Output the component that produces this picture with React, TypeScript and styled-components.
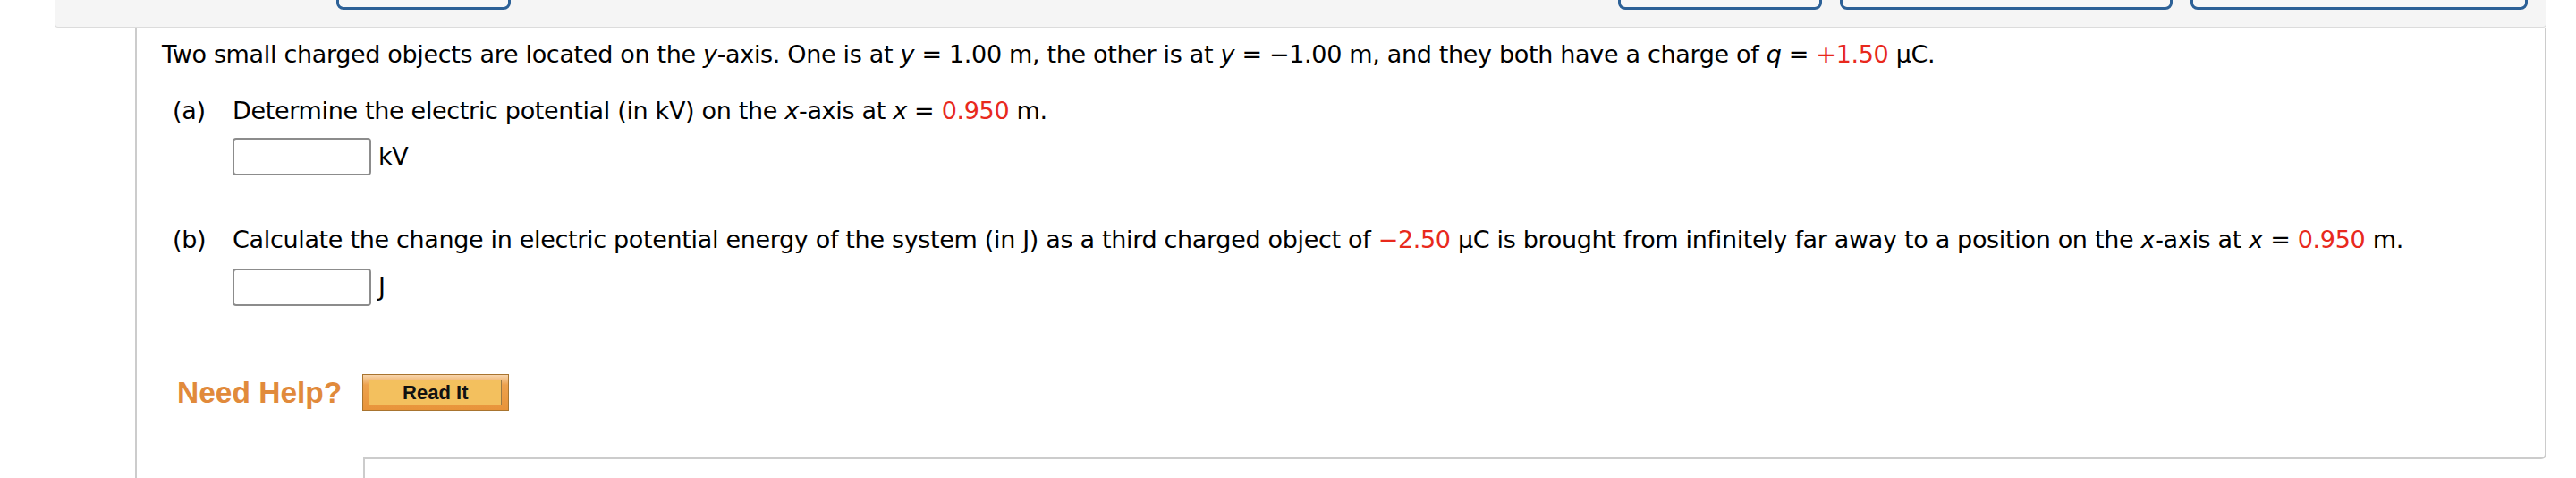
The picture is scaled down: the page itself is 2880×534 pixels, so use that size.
import React from "react";
import styled, { createGlobalStyle } from "styled-components";

const GlobalStyle = createGlobalStyle`
  html, body {
    margin: 0;
    padding: 0;
    background: #ffffff;
  }
  body {
    font-family: "DejaVu Sans", Verdana, sans-serif;
    color: #000000;
  }
`;

const Page = styled.div`
  width: 2786px;
  margin-left: 61px;
  height: 534px;
  overflow: hidden;
`;

const TopBar = styled.div`
  box-sizing: border-box;
  height: 31px;
  background: #f5f5f5;
  border: 1px solid #dcdcdc;
  border-top: none;
  border-radius: 0 0 4px 4px;
  display: flex;
  align-items: flex-end;
  gap: 20px;
  padding: 0 20px 19px 314px;
  overflow: hidden;
`;

const NavButton = styled.div<{ $w: number; $push?: boolean }>`
  box-sizing: border-box;
  flex: none;
  width: ${(p) => p.$w}px;
  height: 40px;
  border: 3px solid #2d6197;
  border-radius: 8px;
  background: #f7f7f7;
  margin-left: ${(p) => (p.$push ? "auto" : "0")};
`;

const Body = styled.div`
  margin-left: 90px;
  border-left: 2px solid #cccccc;
`;

const Panel = styled.div`
  position: relative;
  border-right: 2px solid #cccccc;
  border-bottom: 2px solid #cccccc;
  border-bottom-right-radius: 6px;
  padding: 12px 0 52px 28px;
  font-size: 27px;
  line-height: 36px;
  letter-spacing: -0.33px;
  white-space: nowrap;

  /* the bottom edge only starts where the next box begins */
  &::after {
    content: "";
    position: absolute;
    left: 0;
    bottom: -2px;
    width: 253px;
    height: 2px;
    background: #ffffff;
  }
`;

const Intro = styled.p`
  margin: 0;
`;

const Part = styled.div<{ $top: number }>`
  display: flex;
  margin-top: ${(p) => p.$top}px;
  padding-left: 12px;
`;

const PartLabel = styled.span`
  flex: none;
  width: 67px;
`;

const AnswerRow = styled.div<{ $top: number }>`
  display: flex;
  align-items: center;
  gap: 8px;
  margin-top: ${(p) => p.$top}px;
  padding-left: 79px;
`;

const AnswerInput = styled.input`
  box-sizing: border-box;
  width: 155px;
  height: 42px;
  padding: 0 6px;
  border: 2px solid #8c8c8c;
  border-radius: 4px;
  background: #ffffff;
  font: inherit;
  outline: none;
`;

const Var = styled.i`
  font-style: italic;
`;

const Red = styled.span`
  color: #e8291c;
`;

const HelpRow = styled.div`
  display: flex;
  align-items: center;
  gap: 23px;
  margin-top: 76px;
  padding-left: 17px;
  letter-spacing: 0;
`;

const NeedHelp = styled.span`
  font-family: "Liberation Sans", Arial, sans-serif;
  font-weight: bold;
  font-size: 33.5px;
  line-height: 32px;
  color: #e18a3b;
`;

const ReadIt = styled.button`
  box-sizing: border-box;
  width: 164px;
  height: 41px;
  padding: 5px 7px 5px 6px;
  border: 1px solid #a8742f;
  background: linear-gradient(#f8d6ae 0, #eda24e 28%, #e8943a 100%);
  display: flex;
  cursor: pointer;
`;

const ReadItFace = styled.span`
  flex: 1;
  display: flex;
  align-items: center;
  justify-content: center;
  border: 1px solid #9b7a45;
  background: #f3c05e;
  font-family: "Liberation Sans", Arial, sans-serif;
  font-weight: bold;
  font-size: 22px;
  color: #111111;
`;

const NextBox = styled.div`
  margin-left: 253px;
  height: 30px;
  border-left: 2px solid #cccccc;
`;

export default function App() {
  return (
    <>
      <GlobalStyle />
      <Page>
        <TopBar>
          <NavButton $w={195} />
          <NavButton $w={228} $push />
          <NavButton $w={372} />
          <NavButton $w={377} />
        </TopBar>
        <Body>
          <Panel>
            <Intro>
              Two small charged objects are located on the <Var>y</Var>-axis. One is at{" "}
              <Var>y</Var> = 1.00 m, the other is at <Var>y</Var> = −1.00 m, and they both
              have a charge of <Var>q</Var> = <Red>+1.50</Red> μC.
            </Intro>

            <Part $top={27}>
              <PartLabel>(a)</PartLabel>
              <span>
                Determine the electric potential (in kV) on the <Var>x</Var>-axis at{" "}
                <Var>x</Var> = <Red>0.950</Red> m.
              </span>
            </Part>
            <AnswerRow $top={12}>
              <AnswerInput type="text" />
              <span>kV</span>
            </AnswerRow>

            <Part $top={54}>
              <PartLabel>(b)</PartLabel>
              <span>
                Calculate the change in electric potential energy of the system (in J) as a
                third charged object of <Red>−2.50</Red> μC is brought from infinitely far away
                to a position on the <Var>x</Var>-axis at <Var>x</Var> = <Red>0.950</Red> m.
              </span>
            </Part>
            <AnswerRow $top={14}>
              <AnswerInput type="text" />
              <span>J</span>
            </AnswerRow>

            <HelpRow>
              <NeedHelp>Need Help?</NeedHelp>
              <ReadIt type="button">
                <ReadItFace>Read It</ReadItFace>
              </ReadIt>
            </HelpRow>
          </Panel>
          <NextBox />
        </Body>
      </Page>
    </>
  );
}
